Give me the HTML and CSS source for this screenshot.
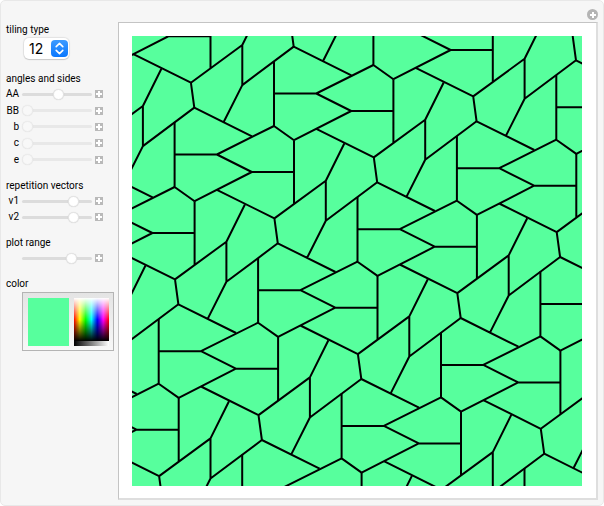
FILE: index.html
```
<!DOCTYPE html>
<html lang="en">
<head>
    <meta charset="UTF-8">
    <meta name="viewport" content="width=device-width, initial-scale=1.0">
    <title>Pentagon Tilings</title>
    <link rel="stylesheet" href="styles.css">
</head>
<body>
    <!-- shared shapes -->
    <svg class="defs" width="0" height="0" aria-hidden="true">
        <symbol id="plus" viewBox="0 0 8 8">
            <path d="M4 1v6M1 4h6" stroke="#fff" stroke-width="2"/>
        </symbol>
    </svg>

    <main class="manipulate">
        <header class="top-bar">
            <button class="menu-btn" aria-label="Options"><svg><use href="#plus"/></svg></button>
        </header>

        <div class="content">
            <form class="controls">
                <section class="type-group">
                    <label class="title" for="type">tiling type</label>
                    <div class="select-wrap">
                        <select id="type">
                            <option>12</option>
                        </select>
                        <svg class="arrows" viewBox="0 0 17 17" aria-hidden="true">
                            <path d="M5.2 6.6 8.5 3.4l3.3 3.2M5.2 10.4l3.3 3.2 3.3-3.2"/>
                        </svg>
                    </div>
                </section>

                <section class="group angles">
                    <h2 class="title">angles and sides</h2>
                    <div class="rows">
                        <div class="row">
                            <label for="aa">AA</label>
                            <input type="range" id="aa" min="0" max="100" value="52">
                            <button type="button" class="more" aria-label="More AA"><svg><use href="#plus"/></svg></button>
                        </div>
                        <div class="row">
                            <label for="bb">BB</label>
                            <input type="range" id="bb" min="0" max="100" value="0" disabled>
                            <button type="button" class="more" aria-label="More BB"><svg><use href="#plus"/></svg></button>
                        </div>
                        <div class="row">
                            <label for="b">b</label>
                            <input type="range" id="b" min="0" max="100" value="0" disabled>
                            <button type="button" class="more" aria-label="More b"><svg><use href="#plus"/></svg></button>
                        </div>
                        <div class="row">
                            <label for="c">c</label>
                            <input type="range" id="c" min="0" max="100" value="0" disabled>
                            <button type="button" class="more" aria-label="More c"><svg><use href="#plus"/></svg></button>
                        </div>
                        <div class="row">
                            <label for="e">e</label>
                            <input type="range" id="e" min="0" max="100" value="0" disabled>
                            <button type="button" class="more" aria-label="More e"><svg><use href="#plus"/></svg></button>
                        </div>
                    </div>
                </section>

                <section class="group">
                    <h2 class="title">repetition vectors</h2>
                    <div class="rows">
                        <div class="row">
                            <label for="v1">v1</label>
                            <input type="range" id="v1" min="0" max="100" value="78">
                            <button type="button" class="more" aria-label="More v1"><svg><use href="#plus"/></svg></button>
                        </div>
                        <div class="row">
                            <label for="v2">v2</label>
                            <input type="range" id="v2" min="0" max="100" value="78">
                            <button type="button" class="more" aria-label="More v2"><svg><use href="#plus"/></svg></button>
                        </div>
                    </div>
                </section>

                <section class="group">
                    <label class="title" for="range">plot range</label>
                    <div class="row">
                        <span></span>
                        <input type="range" id="range" min="0" max="100" value="74">
                        <button type="button" class="more" aria-label="More plot range"><svg><use href="#plus"/></svg></button>
                    </div>
                </section>

                <section class="group">
                    <h2 class="title">color</h2>
                    <div class="color-box">
                        <button type="button" class="swatch" aria-label="Current color"></button>
                        <div class="palette">
                            <div class="hues"></div>
                            <div class="grays"></div>
                        </div>
                    </div>
                </section>
            </form>

            <div class="plot">
                <svg viewBox="0 0 450 450" role="img" aria-label="Pentagon tiling">
                    <defs>
                        <!-- edges of one unit cell: four pentagons -->
                        <path id="cell" d="M162 104.2 142 90V25.2
                            M142 57.5H184.3L219.2 75H261.4
                            M184.3 57.5 241.4 29
                            M219.2 75 162 104.2
                            M184.3 92.8 241.8 121.4 245.2 146.3 302.9 175
                            M261.4 43.2V107.3
                            M241.8 121.4 293.2 83.7V123.8L344.6 85.3
                            M293.2 83.7 311.7 46.5
                            M293.2 123.8 274.7 160.4"/>
                        <g id="strip">
                            <use href="#cell" x="-397.6" y="244"/>
                            <use href="#cell" x="-298.2" y="183"/>
                            <use href="#cell" x="-198.8" y="122"/>
                            <use href="#cell" x="-99.4" y="61"/>
                            <use href="#cell"/>
                            <use href="#cell" x="99.4" y="-61"/>
                            <use href="#cell" x="198.8" y="-122"/>
                            <use href="#cell" x="298.2" y="-183"/>
                        </g>
                    </defs>
                    <rect class="tiles" width="450" height="450"/>
                    <g class="edges">
                        <use href="#strip" x="-250.5" y="-407.1"/>
                        <use href="#strip" x="-167" y="-271.4"/>
                        <use href="#strip" x="-83.5" y="-135.7"/>
                        <use href="#strip"/>
                        <use href="#strip" x="83.5" y="135.7"/>
                        <use href="#strip" x="167" y="271.4"/>
                        <use href="#strip" x="250.5" y="407.1"/>
                    </g>
                </svg>
            </div>
        </div>
    </main>
</body>
</html>
```
FILE: styles.css
```
* {
    box-sizing: border-box;
}
body {
    margin: 0;
    font-family: Roboto, "Liberation Sans", sans-serif;
    font-size: 10px;
    line-height: 16px;
    color: #000;
    background: #fff;
}
button {
    padding: 0;
    border: none;
    display: flex;
    align-items: center;
    justify-content: center;
}
.defs {
    position: absolute;
}
.manipulate {
    padding: 0 5px 5px;
    background: #f6f6f6;
    border: 1px solid #e8e8e8;
    border-radius: 5px;
}
.top-bar {
    display: flex;
    justify-content: flex-end;
    padding: 8px 0 2px;
}
.menu-btn {
    width: 11px;
    height: 11px;
    border-radius: 50%;
    background: #b4b4b4;
}
.menu-btn svg {
    width: 8px;
    height: 8px;
}
.content {
    display: flex;
    align-items: flex-start;
    gap: 4px;
}

/* left column */
.controls {
    flex: none;
    width: 108px;
    padding-top: 1px;
}
.title {
    display: block;
    margin: 0;
    font-size: 10px;
    font-weight: 400;
    line-height: 14px;
}
.group {
    margin-top: 11px;
}
.type-group {
    margin-bottom: 13px;
}
.select-wrap {
    position: relative;
    width: 45px;
    margin: 1px 0 0 18px;
}
select {
    display: block;
    appearance: none;
    width: 100%;
    height: 21px;
    padding: 0 0 0 5px;
    font-family: Inter, "Liberation Sans", sans-serif;
    font-size: 14px;
    color: #000;
    background: #fff;
    border: none;
    border-radius: 5px;
    box-shadow: 0 0 1px 1px rgba(0,0,0,0.08), 0 1px 1px rgba(0,0,0,0.12);
}
.arrows {
    position: absolute;
    top: 2px;
    right: 1px;
    width: 17px;
    height: 17px;
    border-radius: 4px;
    background: linear-gradient(#3d9bff, #0a78ff);
    fill: none;
    stroke: #fff;
    stroke-width: 1.6;
    stroke-linecap: round;
    stroke-linejoin: round;
    pointer-events: none;
}
.rows {
    display: grid;
    grid-auto-rows: 1fr;
}
.angles .rows {
    min-height: 82px;
}
.row {
    display: grid;
    grid-template-columns: 13px 70px 8px;
    column-gap: 3px;
    align-items: center;
    min-height: 16px;
}
.row label {
    text-align: right;
}
input[type=range] {
    appearance: none;
    width: 100%;
    height: 12px;
    margin: 0;
    background: transparent;
}
input[type=range]::-webkit-slider-runnable-track {
    height: 3px;
    border-radius: 2px;
    background: #dcdcdc;
}
input[type=range]::-webkit-slider-thumb {
    appearance: none;
    width: 11px;
    height: 11px;
    margin-top: -4px;
    border: 1px solid #e4e4e4;
    border-radius: 50%;
    background: #fff;
    box-shadow: 0 0 1px rgba(0,0,0,0.15);
}
input[type=range]:disabled::-webkit-slider-runnable-track {
    background: #e8e8e8;
}
input[type=range]:disabled::-webkit-slider-thumb {
    background: #f8f8f8;
    border-color: #ececec;
    box-shadow: 0 0 1px rgba(0,0,0,0.1);
}
.more {
    width: 8px;
    height: 8px;
    background: #b9b9b9;
}
.more svg {
    width: 8px;
    height: 8px;
}
.color-box {
    display: flex;
    gap: 5px;
    width: 92px;
    margin: 1px 0 0 16px;
    padding: 5px 4px 4px 5px;
    background: linear-gradient(#e4e4e4, #f8f8f8);
    border: 1px solid #b4b4b4;
}
.swatch {
    flex: 1;
    background: #57ff9d;
}
.palette {
    width: 35px;
}
.hues {
    height: 43px;
    background:
        linear-gradient(#fff, rgba(255,255,255,0) 50%, rgba(0,0,0,0) 50%, #000),
        linear-gradient(90deg, #f00, #ff0, #0f0, #0ff, #00f, #f0f, #f00);
}
.grays {
    height: 5px;
    background: linear-gradient(90deg, #000, #fff);
}

/* plot area */
.plot {
    flex: 1;
    min-width: 0;
    padding: 13px 14px 12px 13px;
    background: #fff;
    border: 1px solid #c4c4c4;
    border-right: 2px solid #dedede;
    border-bottom: 2px solid #dedede;
}
.plot svg {
    display: block;
    width: 100%;
}
.tiles {
    fill: #57ff9d;
}
.edges {
    fill: none;
    stroke: #000;
    stroke-width: 2;
    stroke-linejoin: round;
}
```
